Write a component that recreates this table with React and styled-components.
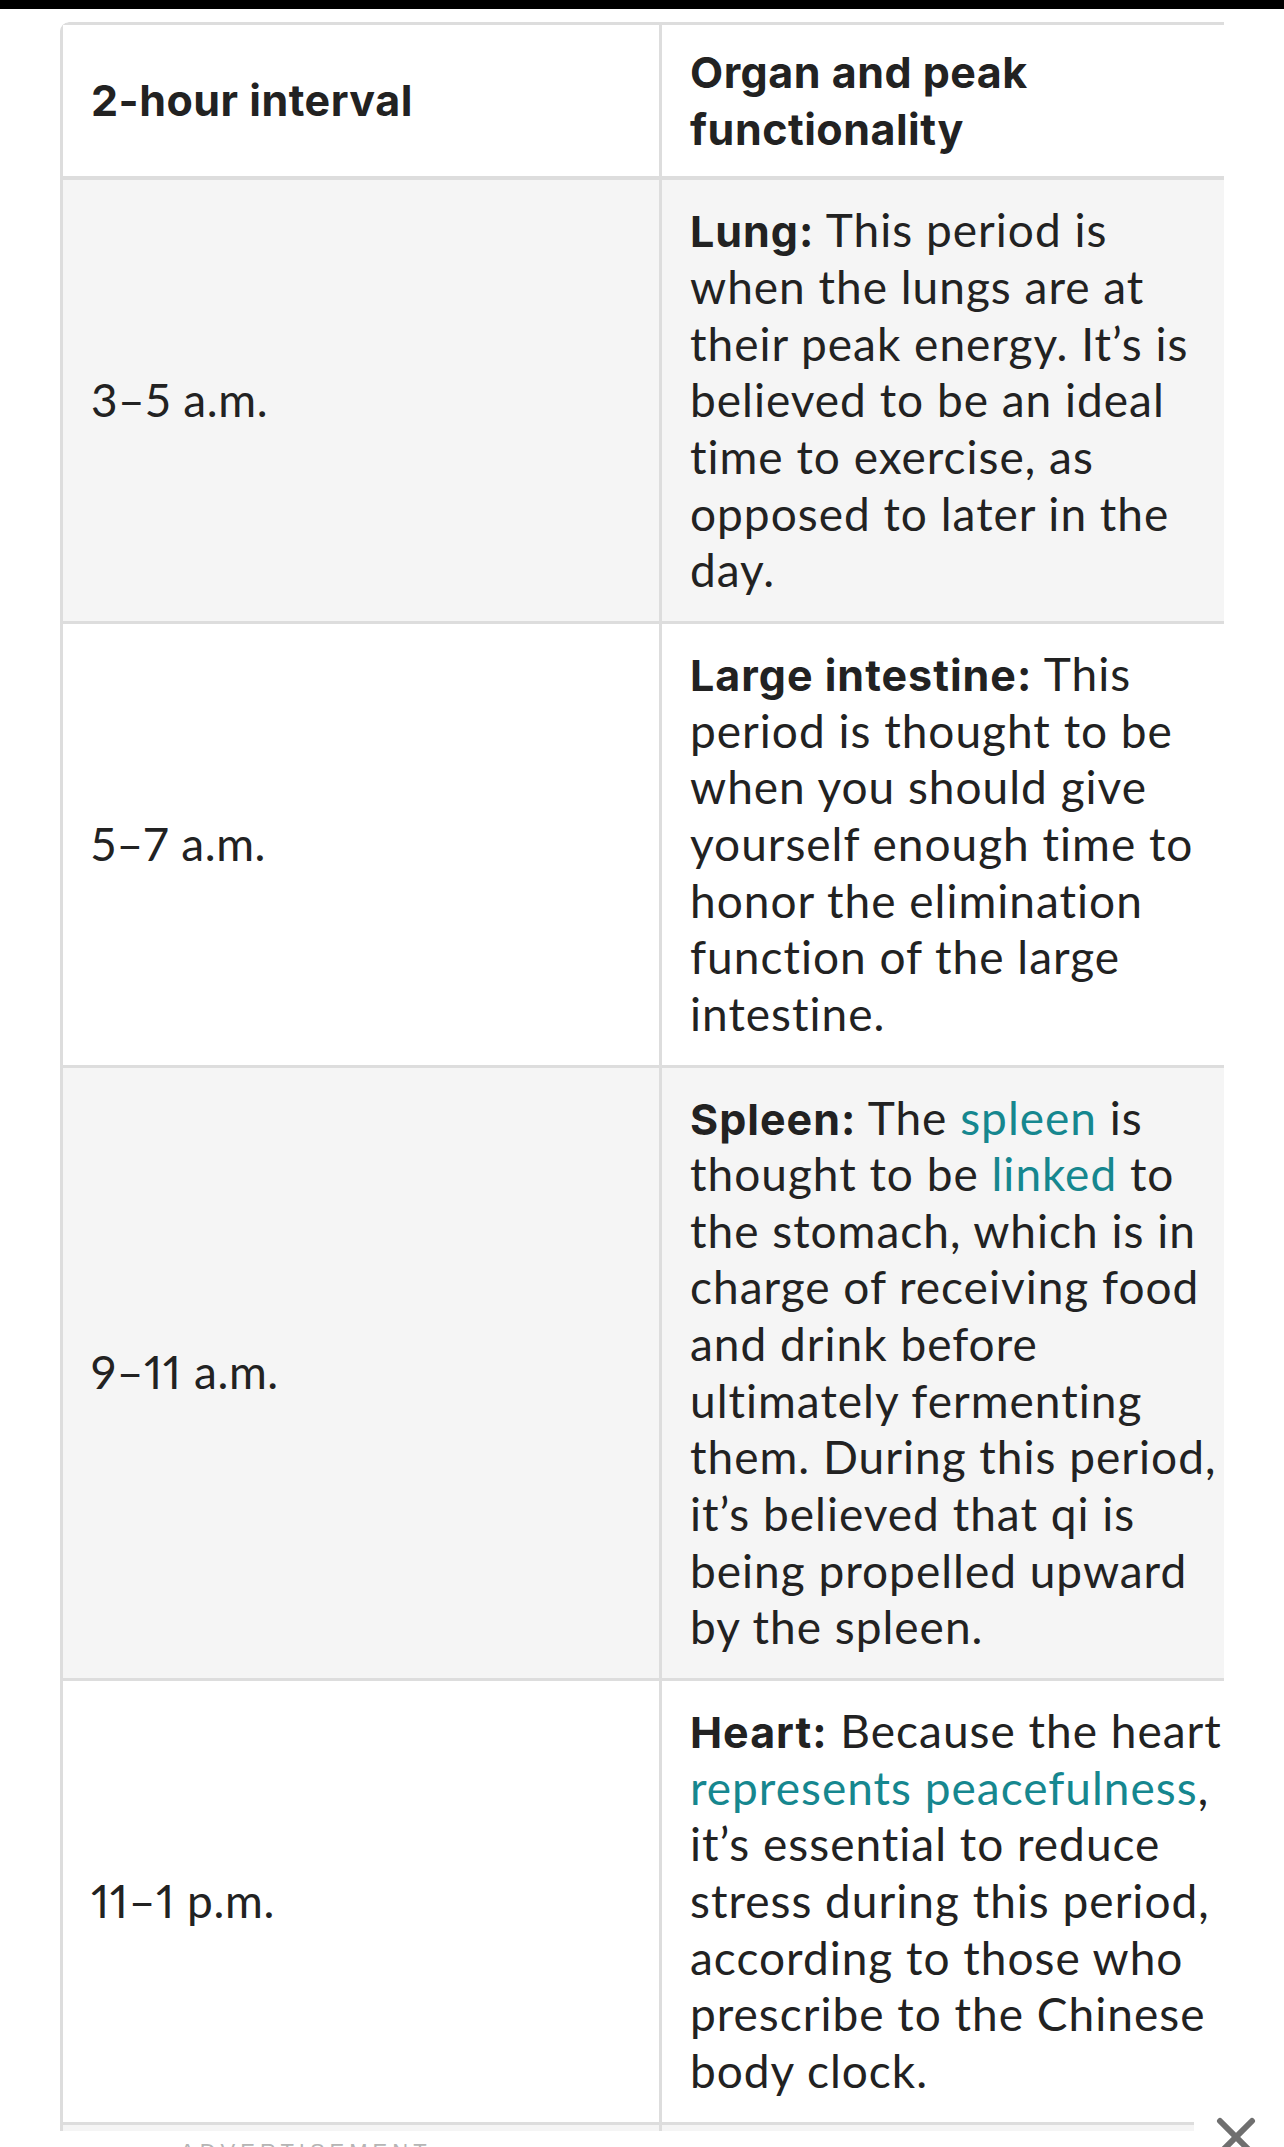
import React from 'react';
import styled, { createGlobalStyle } from 'styled-components';

const GlobalStyle = createGlobalStyle`
  html, body {
    margin: 0;
    padding: 0;
    background: #fff;
  }
  body {
    font-family: Lato, "Open Sans", "Liberation Sans", sans-serif;
    color: #222;
  }
`;

const boldFont = `Inter, Lato, "Liberation Sans", sans-serif`;
const lineHeight = '56.67px';

const Screen = styled.div`
  position: relative;
  width: 1284px;
  height: 2147px;
  overflow: hidden;
  background: #fff;
`;

const TopBar = styled.div`
  height: 9px;
  background: #000;
`;

const TableWrap = styled.div`
  margin: 13px 60px 0 60px;
  overflow: hidden;
  border-top-left-radius: 9px;
`;

const Table = styled.table`
  width: 1240px;
  table-layout: fixed;
  border-collapse: separate;
  border-spacing: 0;
  border-top: 3px solid #ddd;
  border-left: 3px solid #ddd;
  border-top-left-radius: 9px;
  font-size: 46px;
  letter-spacing: 1px;
  line-height: ${lineHeight};
`;

const HeadCell = styled.th`
  text-align: left;
  font-family: ${boldFont};
  font-size: 43px;
  font-weight: 700;
  letter-spacing: 0.5px;
  vertical-align: middle;
  padding: 19px 28px 19px 28px;
  border-bottom: 4px solid #ddd;
  border-right: ${({ $first }) => ($first ? '3px solid #ddd' : 'none')};
  background: #fff;
`;

const Row = styled.tr`
  background: ${({ $shaded }) => ($shaded ? '#f5f5f5' : '#fff')};
`;

const Cell = styled.td`
  vertical-align: middle;
  padding: 22px 28px 22px 28px;
  border-bottom: 3px solid #ddd;
  border-right: ${({ $first }) => ($first ? '3px solid #ddd' : 'none')};
  font-weight: 400;
  white-space: nowrap;
`;

const TimeCell = styled(Cell)`
  font-variant-numeric: proportional-nums;
  letter-spacing: 0.6px;
`;

const Line = styled.span`
  display: block;
  height: ${lineHeight};
`;

const Organ = styled.strong`
  font-family: ${boldFont};
  font-size: 43px;
  font-weight: 700;
  letter-spacing: 1px;
  line-height: 1;
`;

const Link = styled.a`
  color: #16878f;
  text-decoration: none;
`;

const AdBar = styled.div`
  position: absolute;
  left: 0;
  right: 0;
  top: 2131px;
  height: 40px;
  background: #fff;
`;

const AdLabel = styled.div`
  padding: 8px 0 0 180px;
  font-family: "Liberation Sans", Arial, sans-serif;
  font-size: 22px;
  letter-spacing: 5px;
  color: #b5b5b5;
`;

const CloseButton = styled.button`
  position: absolute;
  left: 1194px;
  top: 2104px;
  width: 90px;
  height: 60px;
  padding: 8px 0 0 22px;
  border: none;
  background: #fff;
  text-align: left;
  cursor: pointer;
`;

const rows = [
  {
    time: '3–5 a.m.',
    lines: [
      <><Organ>Lung:</Organ> This period is</>,
      'when the lungs are at',
      'their peak energy. It’s is',
      'believed to be an ideal',
      'time to exercise, as',
      'opposed to later in the',
      'day.',
    ],
  },
  {
    time: '5–7 a.m.',
    lines: [
      <><Organ>Large intestine:</Organ> This</>,
      'period is thought to be',
      'when you should give',
      'yourself enough time to',
      'honor the elimination',
      'function of the large',
      'intestine.',
    ],
  },
  {
    time: '9–11 a.m.',
    lines: [
      <><Organ>Spleen:</Organ> The <Link href="#">spleen</Link> is</>,
      <>thought to be <Link href="#">linked</Link> to</>,
      'the stomach, which is in',
      'charge of receiving food',
      'and drink before',
      'ultimately fermenting',
      'them. During this period,',
      'it’s believed that qi is',
      'being propelled upward',
      'by the spleen.',
    ],
  },
  {
    time: '11–1 p.m.',
    lines: [
      <><Organ>Heart:</Organ> Because the heart</>,
      <><Link href="#">represents peacefulness</Link>,</>,
      'it’s essential to reduce',
      'stress during this period,',
      'according to those who',
      'prescribe to the Chinese',
      'body clock.',
    ],
  },
  {
    time: '1–3 p.m.',
    lines: [
      <><Organ>Small intestine:</Organ> Foods</>,
      'that were consumed earlier',
      'are thought to be fully',
      'digested during this period.',
    ],
  },
];

const App = () => (
  <>
    <GlobalStyle />
    <Screen>
      <TopBar />
      <TableWrap>
        <Table>
          <colgroup>
            <col style={{ width: '599px' }} />
            <col style={{ width: '638px' }} />
          </colgroup>
          <thead>
            <tr>
              <HeadCell $first>2-hour interval</HeadCell>
              <HeadCell>
                <Line>Organ and peak</Line>
                <Line>functionality</Line>
              </HeadCell>
            </tr>
          </thead>
          <tbody>
            {rows.map((row, i) => (
              <Row key={row.time} $shaded={i % 2 === 0}>
                <TimeCell $first>{row.time}</TimeCell>
                <Cell>
                  {row.lines.map((line, j) => (
                    <Line key={j}>{line}</Line>
                  ))}
                </Cell>
              </Row>
            ))}
          </tbody>
        </Table>
      </TableWrap>
      <AdBar>
        <AdLabel>ADVERTISEMENT</AdLabel>
      </AdBar>
      <CloseButton aria-label="Close ad">
        <svg width="40" height="40" viewBox="0 0 40 40">
          <path d="M4 4 L36 36 M36 4 L4 36" stroke="#6f6f6f" strokeWidth="6" strokeLinecap="round" fill="none" />
        </svg>
      </CloseButton>
    </Screen>
  </>
);

export default App;
